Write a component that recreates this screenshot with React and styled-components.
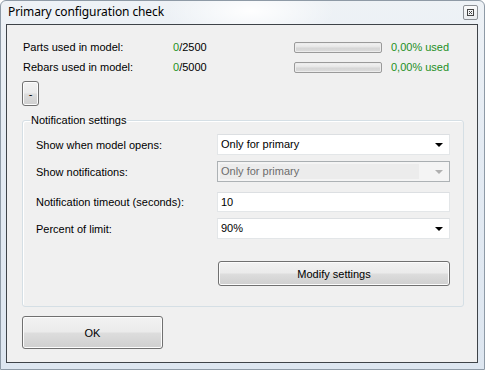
import React from "react";
import styled, { createGlobalStyle } from "styled-components";

const Global = createGlobalStyle`
  html, body { margin: 0; padding: 0; }
  body { width: 485px; height: 370px; overflow: hidden; font-family: "Liberation Sans", Arial, sans-serif; }
`;

const Window = styled.div`
  width: 485px;
  height: 370px;
  box-sizing: border-box;
  display: flex;
  flex-direction: column;
  border: 1px solid #8e9aa6;
  border-radius: 6px 6px 0 0;
  background:
    radial-gradient(ellipse 120px 40px at 250px 10px, rgba(255,255,255,0.95), rgba(255,255,255,0) 70%),
    linear-gradient(180deg, #eef2f6 0%, #e4ebf3 40%, #dde6f0 100%);
`;

const TitleBar = styled.div`
  height: 23px;
  display: flex;
  align-items: center;
  justify-content: space-between;
  padding: 0 6px 0 7px;
`;

const Title = styled.span`
  font-family: "Noto Sans", "Open Sans", sans-serif;
  font-size: 12px;
  color: #000;
  letter-spacing: -0.1px;
  margin-top: -2px;
`;

const CloseButton = styled.div`
  width: 13px;
  height: 13px;
  border: 1px solid #8b8f94;
  border-radius: 2px;
  background: linear-gradient(180deg, #fafafa 0%, #e9ecef 100%);
  display: flex;
  align-items: center;
  justify-content: center;
  margin-top: 0px;
`;

const Client = styled.div`
  margin: 0 6px 6px 5px;
  flex: 1;
  border: 1px solid #3e4348;
  background: #f0f0f0;
  padding: 17px 14px 0 15px;
  color: #000;
  font-size: 11px;
`;

const UsageGrid = styled.div`
  display: grid;
  grid-template-columns: 150px 121px 88px auto;
  grid-auto-rows: 11px;
  row-gap: 9px;
  align-items: center;
  line-height: 11px;
  padding-left: 1px;
`;

const Cell = styled.span`
  white-space: nowrap;
  color: ${(p) => (p.$green ? "#1e8f1e" : "#000")};
  padding-left: ${(p) => p.$pad || 0}px;
`;

const Green = styled.span`
  color: #1e8f1e;
`;

const Bar = styled.div`
  height: 11px;
  box-sizing: border-box;
  border: 1px solid #9a9a9a;
  border-radius: 2px;
  background: linear-gradient(180deg, #f4f4f4 0%, #e6e6e6 45%, #d6d6d6 55%, #dcdcdc 100%);
  box-shadow: inset 0 0 0 1px #ececec;
`;

const Button = styled.button`
  box-sizing: border-box;
  width: ${(p) => p.$w}px;
  height: ${(p) => p.$h}px;
  border: 1px solid #707070;
  border-radius: 3px;
  background: linear-gradient(180deg, #f2f2f2 0%, #ebebeb 48%, #dddddd 52%, #cfcfcf 100%);
  box-shadow: inset 0 0 0 1px #fcfcfc;
  font-family: "Liberation Sans", Arial, sans-serif;
  font-size: 11px;
  color: #000;
  padding: 0;
  margin: 0;
  display: block;
`;

const CollapseButton = styled(Button)`
  margin-top: 8px;
`;

const Group = styled.fieldset`
  margin: 8px 0 0 0;
  width: 442px;
  box-sizing: border-box;
  border: 1px solid #d5dfe5;
  border-radius: 3px;
  padding: 7px 12px 20px 13px;
  box-shadow: inset 1px 1px 0 #fff;
`;

const Legend = styled.legend`
  font-size: 11px;
  line-height: 13px;
  padding: 0 1px;
  margin-left: -6px;
  color: #000;
`;

const Row = styled.div`
  display: grid;
  grid-template-columns: 181px 233px;
  align-items: center;
  margin-top: ${(p) => p.$mt || 0}px;
`;

const Label = styled.span`
  color: ${(p) => (p.$dim ? "#000" : "#000")};
  white-space: nowrap;
`;

const Field = styled.div`
  box-sizing: border-box;
  height: ${(p) => p.$h || 21}px;
  border: 1px solid ${(p) => (p.$disabled ? "#adb2b5" : "#e3e6e8")};
  border-top-color: ${(p) => (p.$disabled ? "#a9aeb1" : "#dcdfe2")};
  background: ${(p) => (p.$disabled ? "#f4f4f4" : "#fff")};
  display: flex;
  align-items: center;
  padding: 0 2px;
  color: ${(p) => (p.$disabled ? "#6d6d6d" : "#000")};
`;

const FieldText = styled.span`
  flex: 1;
  line-height: 15px;
  padding-left: 1px;
  background: ${(p) => (p.$disabled ? "#ececec" : "transparent")};
  margin-right: ${(p) => (p.$disabled ? 16 : 0)}px;
`;

const Arrow = styled.span`
  width: 0;
  height: 0;
  border-left: 4px solid transparent;
  border-right: 4px solid transparent;
  border-top: 4px solid ${(p) => (p.$disabled ? "#b0b0b0" : "#000")};
  margin: 1px 4px 0 0;
`;

const ButtonRow = styled.div`
  display: flex;
  justify-content: flex-end;
  margin-top: 22px;
  padding-right: 1px;
`;

const OkButton = styled(Button)`
  margin-top: 9px;
`;

function Combo({ value, disabled }) {
  return (
    <Field $disabled={disabled}>
      <FieldText $disabled={disabled}>{value}</FieldText>
      <Arrow $disabled={disabled} />
    </Field>
  );
}

export default function App() {
  return (
    <>
      <Global />
      <Window>
        <TitleBar>
          <Title>Primary configuration check</Title>
          <CloseButton>
            <svg width="7" height="7" viewBox="0 0 7 7">
              <rect x="0.5" y="0.5" width="6" height="6" fill="none" stroke="#444" strokeWidth="1" />
              <path d="M2 2 L5 5 M5 2 L2 5" stroke="#444" strokeWidth="1" />
            </svg>
          </CloseButton>
        </TitleBar>
        <Client>
          <UsageGrid>
            <Cell>Parts used in model:</Cell>
            <Cell><Green>0</Green>/2500</Cell>
            <Bar />
            <Cell $green $pad={9}>0,00% used</Cell>
            <Cell>Rebars used in model:</Cell>
            <Cell><Green>0</Green>/5000</Cell>
            <Bar />
            <Cell $green $pad={9}>0,00% used</Cell>
          </UsageGrid>
          <CollapseButton $w={17} $h={25}>-</CollapseButton>
          <Group>
            <Legend>Notification settings</Legend>
            <Row>
              <Label>Show when model opens:</Label>
              <Combo value="Only for primary" />
            </Row>
            <Row $mt={6}>
              <Label>Show notifications:</Label>
              <Combo value="Only for primary" disabled />
            </Row>
            <Row $mt={10}>
              <Label>Notification timeout (seconds):</Label>
              <Field $h={20}>
                <FieldText>10</FieldText>
              </Field>
            </Row>
            <Row $mt={6}>
              <Label>Percent of limit:</Label>
              <Combo value="90%" />
            </Row>
            <ButtonRow>
              <Button $w={232} $h={25}>Modify settings</Button>
            </ButtonRow>
          </Group>
          <OkButton $w={141} $h={33}>OK</OkButton>
        </Client>
      </Window>
    </>
  );
}
